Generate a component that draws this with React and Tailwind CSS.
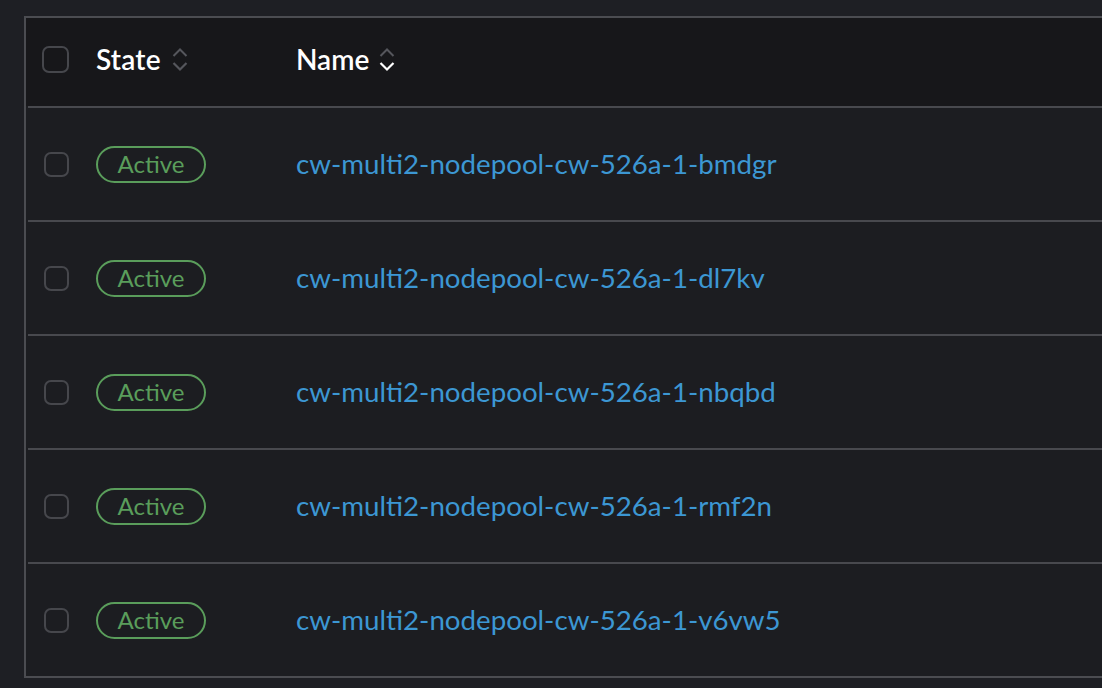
import React from "react";

const rows = [
  "cw-multi2-nodepool-cw-526a-1-bmdgr",
  "cw-multi2-nodepool-cw-526a-1-dl7kv",
  "cw-multi2-nodepool-cw-526a-1-nbqbd",
  "cw-multi2-nodepool-cw-526a-1-rmf2n",
  "cw-multi2-nodepool-cw-526a-1-v6vw5",
];

const SortIcon = ({ active }) => (
  <svg width="18" height="26" viewBox="0 0 18 26" fill="none" className="shrink-0">
    <path d="M2.5 9 L9 2.5 L15.5 9" stroke="#55565c" strokeWidth="2" />
    <path
      d="M2.5 16 L9 22.5 L15.5 16"
      stroke={active ? "#ffffff" : "#55565c"}
      strokeWidth="2.2"
    />
  </svg>
);

const Divider = () => <div className="ml-[2px] h-[2px] bg-[#48494e]" />;

const App = () => {
  return (
    <div
      className="w-[1102px] h-[688px] overflow-hidden bg-[#1e1f24] pt-4 pl-6"
      style={{ fontFamily: "Lato, 'Noto Sans', sans-serif" }}
    >
      <div className="w-[1100px] border-2 border-[#4b4c51] bg-[#1c1d21]">
        <div className="flex h-[88px] items-center bg-[#17171a] pb-[6px]">
          <div className="w-[70px] pl-4">
            <div className="h-[27px] w-[27px] rounded-[7px] border-2 border-[#46474c]" />
          </div>
          <div className="flex w-[200px] items-center gap-[10px] text-[28px] font-semibold tracking-[0.2px] text-white">
            State
            <span className="mt-[2px]"><SortIcon /></span>
          </div>
          <div className="flex items-center gap-[9px] text-[28px] font-semibold text-white">
            Name
            <span className="mt-[2px]"><SortIcon active /></span>
          </div>
        </div>
        {rows.map((name) => (
          <div key={name}>
            <Divider />
            <div className="flex h-[112px] items-center">
              <div className="w-[70px] pl-[18px]">
                <div className="h-[25px] w-[25px] rounded-[7px] border-2 border-[#46474c]" />
              </div>
              <div className="w-[200px]">
                <span className="inline-flex h-[37px] w-[110px] items-center justify-center rounded-full border-2 border-[#5a9d5b] text-[24px] text-[#5a9d5b]">
                  Active
                </span>
              </div>
              <a className="text-[27.7px] text-[#3c97d3]">{name}</a>
            </div>
          </div>
        ))}
      </div>
    </div>
  );
};

export default App;
